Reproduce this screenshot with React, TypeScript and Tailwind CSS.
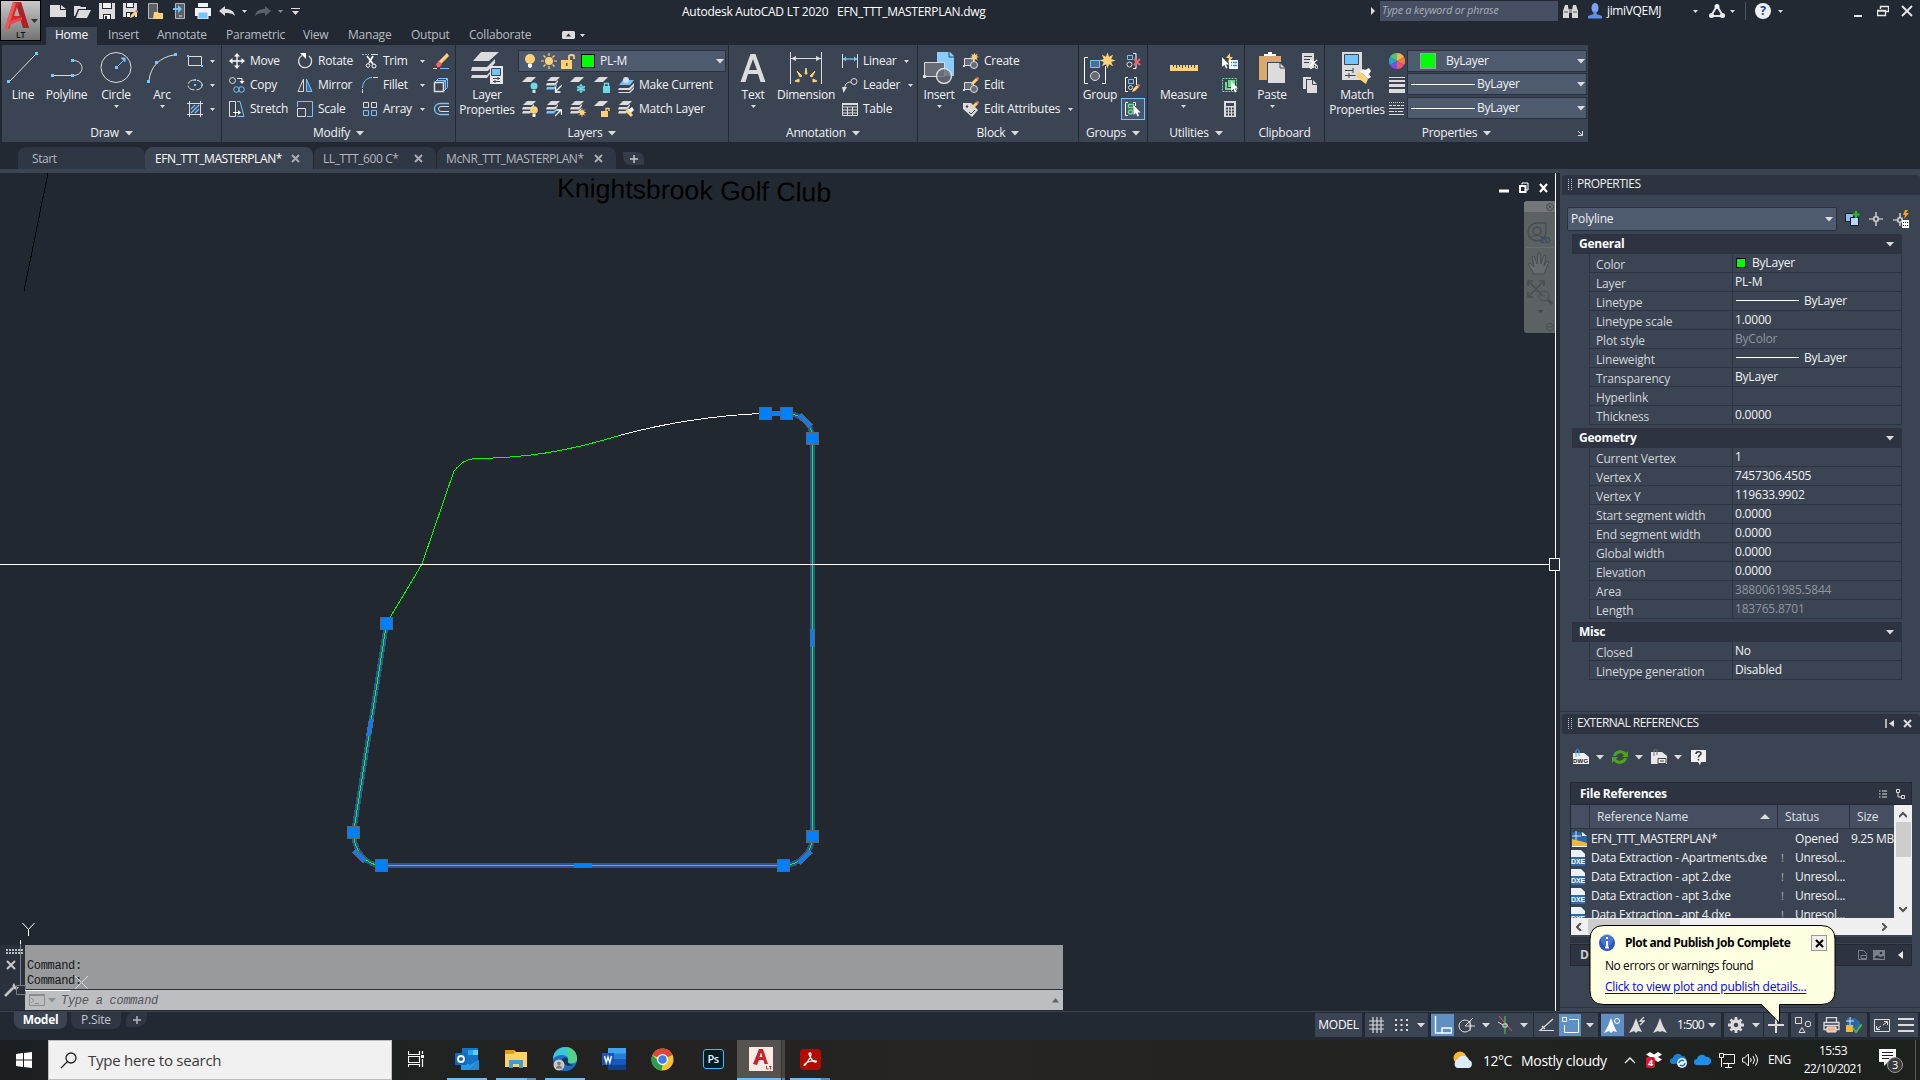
import type { ReactNode } from 'react';

const G = '#dcdcdc';
const B = '#76c4ff';
const Y = '#ffd27a';
const T = '#6cd9e6';
const BG = '#3b4453';

interface IconProps {
  w?: number;
  h?: number;
  children: ReactNode;
}

function Icon({ w = 16, h = 16, children }: IconProps) {
  return (
    <svg width={w} height={h} viewBox={`0 0 ${w} ${h}`} fill="none" className="shrink-0">
      {children}
    </svg>
  );
}

function Caret({ big = false, color = G }: { big?: boolean; color?: string }) {
  return big ? (
    <svg width="8" height="5" viewBox="0 0 8 5" className="shrink-0"><path d="M0 0h8L4 4.6z" fill={color} /></svg>
  ) : (
    <svg width="5" height="3" viewBox="0 0 5 3" className="shrink-0"><path d="M0 0h5L2.5 3z" fill={color} /></svg>
  );
}

/* ---------- shared glyphs ---------- */

const Sheet = ({ x = 0, y = 0, c = G }: { x?: number; y?: number; c?: string }) => (
  <path d={`M${x + 5} ${y}h9l-5 5h-9z`} fill={c} />
);

const Stack = ({ mid = G }: { mid?: string }) => (
  <>
    <path d="M5 0h9l-4 4H1z" fill={G} />
    <path d="M1 6h8l3-3v2L9 8.500H0z" fill={G} />
    <path d="M1 10h7l3-3v2l-3 3.500H0z" fill={mid} />
  </>
);

const Cursor = ({ x, y }: { x: number; y: number }) => (
  <path d={`M${x} ${y}v10l2.500-2 1.500 3.500 1.500-.8-1.500-3.200h3z`} fill="#fff" />
);

const Pencil = ({ x, y }: { x: number; y: number }) => (
  <g transform={`translate(${x} ${y})`}>
    <path d="M0 8l1-3 4-4 2 2-4 4z" fill={Y} />
    <path d="M5 1l1-1h1l1 1v1L7 3z" fill="#f4606c" />
  </g>
);

const Star = ({ x, y, r }: { x: number; y: number; r: number }) => {
  const pts = Array.from({ length: 16 }, (_, i) => {
    const a = (i * Math.PI) / 8;
    const d = i % 2 ? r * 0.5 : r;
    return `${x + d * Math.cos(a)},${y + d * Math.sin(a)}`;
  });
  return <polygon points={pts.join(' ')} fill={Y} />;
};

/* ---------- title bar ---------- */

function QuickAccess() {
  return (
    <div className="flex items-center h-[22px] pl-[9px]">
      <Icon w={16} h={12}><path d="M0 0h10v5h6v7H0z" fill={G} /><path d="M11 0l5 4h-5z" fill={G} /></Icon>
      <div className="w-2" />
      <Icon w={17} h={13}><path d="M0 1h6l1 1h5v2H4L1 11H0z" fill={G} /><path d="M5 5h12l-4 8H2z" fill={G} /></Icon>
      <div className="w-2" />
      <Icon><path d="M0 0h16v16H0z" fill={G} /><path d="M3 0h10v6H3zM4 11h8v5H4z" fill="#222933" /><path d="M4 0h8v5H4zM5 12h6v4H5z" fill="#f4f4f4" /><path d="M6 13h2v3H6z" fill="#222933" /></Icon>
      <div className="w-2" />
      <Icon><path d="M0 0h14v14H0z" fill={G} /><path d="M3 0h8v5H3zM3 9h9v6H3z" fill="#222933" /><path d="M4 0h6v4H4zM4 10h3v4H4z" fill="#f4f4f4" /><Pencil x={7} y={7} /></Icon>
      <div className="w-[9px]" />
      <Icon w={16} h={17}><path d="M.5.500h9v15h-9z" fill="#5d6166" stroke="#b4b7ba" /><path d="M6 9h4l1 1h4v6H5z" fill={Y} /></Icon>
      <div className="w-[9px]" />
      <Icon w={13} h={17}><path d="M2.500.500h9v15h-9z" fill="#5d6166" stroke="#b4b7ba" /><path d="M0 5h5V2l4 4-4 4V7H0z" fill={B} /><path d="M6 13h3" stroke={G} /></Icon>
      <div className="w-[9px]" />
      <Icon w={16} h={16}><path d="M3 0h10v4H3zM0 5h16v8h-3V9H3v4H0z" fill="#f2f2f2" /><path d="M3 9h10v7H3z" fill={B} stroke="#f2f2f2" /></Icon>
      <div className="w-2" />
      <Icon w={16} h={11}><path d="M0 5l6-5v3c6 0 9 2 10 7-3-3-6-3-10-3v3z" fill={G} /></Icon>
      <div className="w-[7px]" /><Caret />
      <div className="w-2" />
      <Icon w={16} h={11}><path d="M16 5l-6-5v3C4 3 1 5 0 10c3-3 6-3 10-3v3z" fill="#5c6168" /></Icon>
      <div className="w-[7px]" /><Caret color="#8b8f95" />
      <div className="w-2" />
      <Icon w={9} h={7}><path d="M0 0h9v1H0zM1 3h7L4.500 7z" fill={G} /></Icon>
    </div>
  );
}

function AppButton() {
  return (
    <div className="w-[41px] h-[41px] shrink-0 border border-black bg-linear-to-b from-[#c9c9c9] to-[#747474]">
      <svg width="39" height="39" viewBox="0 0 39 39">
        <path d="M4 27L12 1h8l8 26h-6l-2-7h-9l-3 8z" fill="#d32a30" />
        <path d="M13 15l3-9 3 9z" fill="#a9a9a9" />
        <path d="M4 27L12 1l3 1-8 26z" fill="#ef5a57" />
        <path d="M16 6l4-5 8 26-6 0z" fill="#9e1b22" opacity=".65" />
        <path d="M8 20l13-4v3l-13 5z" fill="#e8484a" />
        <path d="M30 18h7l-3.500 4z" fill="#333" />
        <text x="15" y="37" fontFamily="Open Sans, sans-serif" fontSize="8.500" fontWeight="600" fill="#111">LT</text>
      </svg>
    </div>
  );
}

function TitleBar() {
  return (
    <div className="flex h-[27px]">
      <div className="w-[641px]"><QuickAccess /></div>
      <div className="flex items-center h-6 w-[689px] text-[12px] tracking-[-0.26px] text-white whitespace-pre">
        <span className="w-[155px]">Autodesk AutoCAD LT 2020</span>
        <span>EFN_TTT_MASTERPLAN.dwg</span>
      </div>
      <div className="flex items-center h-[22px]">
        <svg width="4" height="8"><path d="M0 0l4 4-4 4z" fill={G} /></svg>
        <div className="ml-[5px] w-[178px] h-5 bg-[#464f61] text-[10.5px] tracking-[-0.1px] italic text-[#aab0ba] flex items-center pl-[2px]">Type a keyword or phrase</div>
        <div className="w-[5px]" />
        <Icon w={15} h={14}><path d="M2 1h3v2l1 3v8H0V7zM10 1h3l2 6v7H9V6z" fill="#d8d8d8" /><path d="M6 5h3v4H6z" fill="#9a9a9a" /><path d="M1 8h4M10 8h4" stroke="#555" /></Icon>
        <div className="w-[10px]" />
        <Icon w={14} h={16}><ellipse cx="7" cy="5" rx="3.500" ry="5" fill="#78a6f5" /><path d="M5.500 8h3v3l5.500 2v2.500H0V13l5.500-2z" fill="#5f8fe8" /></Icon>
        <span className="ml-[5px] w-[86px] text-[12px] tracking-[-0.35px] text-white">jimiVQEMJ</span>
        <Caret />
        <div className="w-[11px]" />
        <Icon w={16} h={14}><path d="M8 2L2 12h12z" stroke="#dfe4f2" strokeWidth="2" /><circle cx="8" cy="2.500" r="2.500" fill="#eee" /><circle cx="2.500" cy="11.500" r="2.500" fill="#eee" /><circle cx="13.500" cy="11.500" r="2.500" fill="#eee" /></Icon>
        <div className="w-[5px]" /><Caret />
        <div className="w-px h-[18px] bg-[#4a5364] ml-[10px] mr-[9px]" />
        <div className="w-[16px] h-[16px] rounded-full bg-[#eef2fb] text-[#1d3fa8] text-[12px] font-bold flex items-center justify-center leading-none">?</div>
        <div className="w-[7px]" /><Caret />
        <div className="w-[71px]" />
        <Icon w={9} h={12}><path d="M0 10h8v2H0z" fill="#e8e8e8" /></Icon>
        <div className="w-[14px]" />
        <Icon w={12} h={12}><path d="M3.500 4V1.500h8v5H9M.500 5.500h8v5h-8zM0 6h9" stroke="#e8e8e8" strokeWidth="1.400" /></Icon>
        <div className="w-[12px]" />
        <Icon w={12} h={12}><path d="M1 1l10 10M11 1L1 11" stroke="#e8e8e8" strokeWidth="1.800" /></Icon>
      </div>
    </div>
  );
}

function MenuTabs() {
  return (
    <div className="flex h-[18px] text-[12px] tracking-[-0.22px] text-[#b9bdc3] leading-[16px]">
      <div className="w-[5px]" />
      <div className="w-[51px] bg-[#3b4453] text-white text-center">Home</div>
      <div className="w-[11px]" />
      <div className="w-[49px]">Insert</div>
      <div className="w-[69px]">Annotate</div>
      <div className="w-[77px]">Parametric</div>
      <div className="w-[45px]">View</div>
      <div className="w-[63px]">Manage</div>
      <div className="w-[58px]">Output</div>
      <div className="w-[93px]">Collaborate</div>
      <div className="flex items-center gap-[5px] h-4">
        <Icon w={13} h={8}><rect width="13" height="8" rx="1.500" fill={G} /><path d="M4 5.500h5L6.500 2.500z" fill="#222933" /></Icon>
        <Caret />
      </div>
    </div>
  );
}

/* ---------- ribbon ---------- */

interface PanelProps {
  label: string;
  className: string;
  caret?: boolean;
  corner?: boolean;
  children: ReactNode;
}

function Panel({ label, className, caret = true, corner = false, children }: PanelProps) {
  return (
    <div className={`${className} h-[97px] bg-[#3b4453] flex flex-col shrink-0`}>
      <div className="flex h-[76px] pt-[4px]">{children}</div>
      <div className="h-[21px] flex items-center justify-center gap-[6px] pt-[3px] relative">
        <span>{label}</span>
        {caret && <Caret big />}
        {corner && <svg width="5" height="5" className="absolute right-[5px] top-[10px]"><path d="M0 0l4 4M4.500 0v4.500H0" stroke={G} fill="none" /></svg>}
      </div>
    </div>
  );
}

interface BigProps {
  icon: ReactNode;
  label: string;
  label2?: string;
  className: string;
  caret?: boolean;
}

function Big({ icon, label, label2, className, caret }: BigProps) {
  return (
    <div className={`${className} flex flex-col items-center shrink-0 pt-[3px]`}>
      <div className="h-8 flex items-center">{icon}</div>
      <div className="h-[15px] mt-[3px] leading-[15px]">{label}</div>
      {label2 && <div className="h-[15px] leading-[15px]">{label2}</div>}
      {caret && <div className="pt-[3px] h-2 flex"><Caret /></div>}
    </div>
  );
}

interface CmdProps {
  icon: ReactNode;
  label?: string;
  caret?: boolean;
}

function Cmd({ icon, label, caret }: CmdProps) {
  return (
    <div className="h-6 flex items-center">
      <div className="w-[17px] flex shrink-0">{icon}</div>
      {label && <span className="ml-1">{label}</span>}
      {caret && <div className="ml-[8px] flex"><Caret /></div>}
    </div>
  );
}

function DrawPanel() {
  return (
    <Panel label="Draw" className="w-[219px]">
      <Big className="w-[42px]" label="Line" icon={
        <Icon w={32} h={32}><path d="M3 29L28 3" stroke={G} /><path d="M0 28h3v3H0zM28 0h3v3h-3z" fill={B} /></Icon>
      } />
      <Big className="w-[45px]" label="Polyline" icon={
        <Icon w={32} h={32}><path d="M2 23.500h20c12 0 12-15 0-15" stroke={G} /><path d="M0 22h3v3H0zM20 22h3v3h-3zM20 7h3v3h-3z" fill={B} /></Icon>
      } />
      <Big className="w-[54px]" label="Circle" caret icon={
        <Icon w={32} h={32}><circle cx="16" cy="15.500" r="15" stroke={G} /><path d="M17 15l8-8M21 6h4v4" stroke={B} /><path d="M15 14h3v3h-3zM25 6h-4l4 4z" fill={B} /></Icon>
      } />
      <Big className="w-[38px]" label="Arc" caret icon={
        <Icon w={32} h={32}><path d="M3 29C4 15 14 5 28 3" stroke={G} /><path d="M1 28h3v3H1zM9 9h3v3H9zM28 1h3v3h-3z" fill={B} /></Icon>
      } />
      <div className="ml-[6px] flex flex-col">
        {[
          <Icon key="rect"><path d="M1.500 3.500h13v9h-13z" stroke={G} /><path d="M0 2h2v2H0zM14 12h2v2h-2z" fill={B} /></Icon>,
          <Icon key="ellipse"><ellipse cx="8" cy="8" rx="7" ry="5" stroke={G} strokeDasharray="8 2" /><path d="M7 2h2v2H7zM7 7h2v2H7zM14 7h2v2h-2z" fill={B} /></Icon>,
          <Icon key="hatch"><path d="M2.500 0v16M13.500 0v16M0 2.500h16M0 13.500h16" stroke={G} /><path d="M4 8l4-4M4 12l8-8M8 12l4-4" stroke={B} strokeWidth="1.300" /></Icon>
        ].map((icon, i) => (
          <div key={i} className="h-6 flex items-center gap-[7px]">{icon}<Caret /></div>
        ))}
      </div>
    </Panel>
  );
}

function ModifyPanel() {
  return (
    <Panel label="Modify" className="w-[233px]">
      <div className="w-[68px] ml-[7px]">
        <Cmd label="Move" icon={<Icon><path d="M8 1v14M1 8h14" stroke="#fff" strokeWidth="1.300" /><path d="M8 0l3 3.500H5zM8 16l3-3.500H5zM0 8l3.500-3v6zM16 8l-3.500-3v6z" fill="#fff" /></Icon>} />
        <Cmd label="Copy" icon={<Icon><circle cx="3.500" cy="3.500" r="3" stroke={G} /><path d="M8 1.500h5v4" stroke="#fff" /><path d="M10.500 4h5L13 7z" fill="#fff" /><circle cx="7.500" cy="12.500" r="2.800" stroke={B} /><circle cx="12.500" cy="12.500" r="2.800" stroke={B} /></Icon>} />
        <Cmd label="Stretch" icon={<Icon><path d="M.500.500h6v15h-6z" stroke={G} /><path d="M8 .500h3l4 15H8" stroke={B} /><path d="M4 11.500h5" stroke="#fff" /><path d="M9 9l3 2.500L9 14z" fill="#fff" /></Icon>} />
      </div>
      <div className="w-[65px]">
        <Cmd label="Rotate" icon={<Icon><path d="M5 2.500A6.500 6.500 0 1 0 12 3" stroke={G} strokeWidth="1.300" /><path d="M3 0h6v6z" fill="#fff" /></Icon>} />
        <Cmd label="Mirror" icon={<Icon><path d="M6.500 2v12.500H1z" stroke={G} /><path d="M9.500 2v12.500H15z" stroke={B} fill="#3f6f96" /></Icon>} />
        <Cmd label="Scale" icon={<Icon><path d="M.500 6V.500h15v15H10" stroke={B} /><path d="M.500 7.500h8v8h-8z" stroke={G} /></Icon>} />
      </div>
      <div className="w-[71px]">
        <div className="flex items-center"><Cmd label="Trim" icon={<Icon><path d="M0 1.500h7" stroke={B} strokeDasharray="2 1" /><path d="M9 1.500h7" stroke={G} /><path d="M5 3l6 8M11 3L7 10" stroke="#fff" strokeWidth="1.600" /><circle cx="6" cy="12.500" r="1.800" stroke="#fff" /><circle cx="12" cy="13" r="2" stroke="#fff" /></Icon>} /><div className="ml-[12px] flex"><Caret /></div></div>
        <div className="flex items-center"><Cmd label="Fillet" icon={<Icon><path d="M.500 11C.500 5 5 .500 10 .500" stroke={B} /><path d="M.500 12v4M11 .500h5" stroke={G} /></Icon>} /><div className="ml-[12px] flex"><Caret /></div></div>
        <Cmd label="Array" caret icon={<Icon><path d="M1.500 1.500h5v5h-5zM9.500 1.500h5v5h-5z" stroke={G} /><path d="M1.500 9.500h5v5h-5zM9.500 9.500h5v5h-5z" stroke={B} /></Icon>} />
      </div>
      <div className="w-4">
        <Cmd icon={<Icon><path d="M5 9l9-9 2 3-8 8z" fill={Y} /><path d="M3 11l3-3 3 3-2 3H4z" fill="#f4606c" /><path d="M0 15.500h4" stroke={G} /><path d="M7 15.500h9" stroke={B} /></Icon>} />
        <Cmd icon={<Icon><path d="M3 3.500h9.500V13M5.500 1.500h9v9" stroke={B} /><path d="M1.500 5.500h9v9h-9z" stroke={G} strokeWidth="1.500" /><path d="M1.500 5.500l4-4M10.500 5.500l4-4M10.500 14.500l4-4" stroke={B} /></Icon>} />
        <Cmd icon={<Icon><path d="M16 2.500H7a5.500 5.500 0 0 0 0 11h9" stroke={B} strokeWidth="1.300" /><path d="M16 5.500H8a2.500 2.500 0 0 0 0 5h8" stroke={G} /></Icon>} />
      </div>
    </Panel>
  );
}

function LayersPanel() {
  return (
    <Panel label="Layers" className="w-[272px]">
      <Big className="w-[62px]" label="Layer" label2="Properties" icon={
        <Icon w={32} h={32}><path d="M10 0h18l-10 9H2z" fill={G} /><path d="M1 15h15l8-8v4l-7 8H0zM1 23h15l3-3v2l-3 4H0z" fill={G} /><path d="M19 14h13v18H19z" fill="#e8e8e8" /><path d="M20.500 16.500h9v7h-9z" fill={B} stroke="#3b4453" /><path d="M22 26.500h7M22 29.500h7M27 25v3M24 28v3" stroke="#3b4453" /></Icon>
      } />
      <div className="flex flex-col">
        <div className="mt-px h-[22px] w-[208px] bg-[#4e5b6f] border border-[#2a313d] flex items-center pl-[6px]">
          <Icon w={10} h={14}><circle cx="5" cy="5" r="5" fill={Y} /><path d="M3 10h4v3l-2 1-2-1z" fill="#fff" /></Icon>
          <div className="w-[6px]" />
          <Icon><circle cx="8" cy="8" r="4" fill={Y} /><path d="M8 0v3M8 13v3M0 8h3M13 8h3M2.500 2.500l2 2M11.500 11.500l2 2M13.500 2.500l-2 2M4.500 11.500l-2 2" stroke={Y} strokeWidth="1.200" /></Icon>
          <div className="w-[4px]" />
          <Icon w={14} h={15}><path d="M0 6h11v9H0z" fill={Y} /><path d="M8 6V2.500C8 .500 13 .500 13 2.500V5" stroke={Y} strokeWidth="1.800" /><path d="M5 9h1.500v3H5z" fill="#4e5b6f" /></Icon>
          <div className="w-[14px] h-[14px] bg-[#00ff00] border border-black ml-[6px]" />
          <span className="ml-[5px] flex-1">PL-M</span>
          <div className="mr-[1px] flex"><Caret big /></div>
        </div>
        <div className="flex h-6 mt-px items-center pl-1">
          <div className="grid grid-cols-[24px_24px_24px_24px] items-center">
            <Icon><Sheet y={0} /><circle cx="12" cy="9" r="3.500" fill={T} /><path d="M10.500 13h3v3h-3z" fill={G} /></Icon>
            <Icon><Stack mid={B} /><path d="M16 8l-6 6M9.500 10v5h5" stroke="#fff" strokeWidth="1.300" /></Icon>
            <Icon><Sheet y={0} /><path d="M11 7v9M7 9.500l8 4M15 9.500l-8 4" stroke={T} strokeWidth="1.400" /><circle cx="11" cy="11.500" r="3" stroke={T} /></Icon>
            <Icon><Sheet y={0} /><path d="M9 9h7v7H9z" fill={T} /><path d="M10.500 9V6.500h4V9" stroke={T} strokeWidth="1.300" /></Icon>
          </div>
          <Cmd label="Make Current" icon={<Icon><path d="M5 3h11l-4 5H1z" fill={B} /><circle cx="8" cy="3" r="3" fill={G} /><path d="M1 11h10l5-5v3l-4 4H0zM1 15h10l5-5v2l-4 4H0z" fill={G} /></Icon>} />
        </div>
        <div className="flex h-6 items-center pl-1">
          <div className="grid grid-cols-[24px_24px_24px_24px] items-center">
            <Icon><Stack /><circle cx="12" cy="9" r="3.800" fill={Y} /><path d="M10.500 13h3v3h-3z" fill="#fff" /></Icon>
            <Icon><Stack mid={B} /><path d="M9 15l6-6M10.500 9h5v5" stroke="#fff" strokeWidth="1.300" /></Icon>
            <Icon><Stack /><circle cx="12" cy="11.500" r="2.500" fill={Y} /><path d="M12 7v9M7.500 11.500h9M9 8.500l6 6M15 8.500l-6 6" stroke={Y} strokeWidth=".8" /></Icon>
            <Icon><Sheet y={0} /><path d="M7 10h7v6H7z" fill={Y} /><path d="M12 10V7.500h3V10" stroke={Y} strokeWidth="1.300" /></Icon>
          </div>
          <Cmd label="Match Layer" icon={<Icon><Stack /><path d="M7 10l3-2 5 6-2 2z" fill={Y} /><path d="M10 9l4-3 2 3-3 3z" fill="#fff" /></Icon>} />
        </div>
      </div>
    </Panel>
  );
}

function AnnotationPanel() {
  return (
    <Panel label="Annotation" className="w-[188px]">
      <div className="w-[4px]" />
      <Big className="w-[40px]" label="Text" caret icon={
        <Icon w={26} h={30}><path d="M10.500 1h5l10 28h-5l-2.500-8H8l-2.500 8H.500zM13 6l-4 11h8z" fill={G} fillRule="evenodd" /></Icon>
      } />
      <Big className="w-[66px]" label="Dimension" icon={
        <Icon w={32} h={32}><path d="M.500 0v32M31.500 0v32M1 6.500h30" stroke={G} /><path d="M1 6.500l5-2.500v5zM31 6.500l-5-2.500v5z" fill={G} /><path d="M5 29l4-2v3zM27 29l-4-2v3zM7 19l5 5-2 1zM25 19l-5 5 2 1zM15 22l1-6 1 6z" fill={Y} stroke={Y} /></Icon>
      } />
      <div className="ml-[3px]">
        <Cmd label="Linear" caret icon={<Icon><path d="M.500 1v14M15.500 1v14" stroke={G} /><path d="M1 6h14" stroke={B} strokeWidth="1.300" /><path d="M1 6l3-2.500v5zM15 6l-3-2.500v5z" fill={B} /></Icon>} />
        <Cmd label="Leader" caret icon={<Icon><circle cx="12" cy="4.500" r="3" stroke={G} /><path d="M9 5C4 5 3 8 2.500 12" stroke={G} /><path d="M0 10h5l-3.500 6z" fill={G} /></Icon>} />
        <Cmd label="Table" icon={<Icon><path d="M.500 2.500h15v12H.500zM0 6h16M0 9h16M0 12h16M5.500 6v9M10.500 6v9" stroke={G} /><path d="M0 2h16v2H0z" fill={G} /></Icon>} />
      </div>
    </Panel>
  );
}

const BlockShape = () => (
  <>
    <path d="M1.500 5.500h9v7h-9z" fill="#666b75" stroke={G} />
    <circle cx="11" cy="12" r="3.500" fill="#666b75" stroke={G} />
    <path d="M0 12h2v2H0z" fill={G} />
  </>
);

function BlockPanel() {
  return (
    <Panel label="Block" className="w-[160px]">
      <Big className="w-[42px]" label="Insert" caret icon={
        <Icon w={32} h={32}><path d="M14 0h13l4 4v20H14z" fill="#8accff" /><path d="M26 0v5h6" stroke="#3b4453" /><path d="M1.500 10.500h20v14h-20z" fill="#666b75" stroke={G} /><circle cx="21" cy="24" r="7.500" fill="#666b75" fillOpacity=".8" stroke={G} strokeWidth="1.400" /><path d="M0 23h3v3H0z" fill={G} /></Icon>
      } />
      <div className="ml-[3px]">
        <Cmd label="Create" icon={<Icon><BlockShape /><Star x={11.500} y={4} r={4.500} /></Icon>} />
        <Cmd label="Edit" icon={<Icon><BlockShape /><Pencil x={8} y={0} /></Icon>} />
        <Cmd label="Edit Attributes" caret icon={<Icon><path d="M0 2h8l7 7-6 7-9-8z" fill={G} /><circle cx="4" cy="5.500" r="1.200" fill={BG} /><path d="M6 11l2 2 4-4" stroke={BG} /><Pencil x={8} y={0} /></Icon>} />
      </div>
    </Panel>
  );
}

function GroupsPanel() {
  return (
    <Panel label="Groups" className="w-[68px]">
      <Big className="w-[42px]" label="Group" icon={
        <Icon w={32} h={32}><path d="M4 5.500H.500v26H4M18 31.500h3.500V14" stroke="#fff" /><path d="M6.500 8.500h9v7h-9z" fill="#4c6f90" stroke={B} /><circle cx="11" cy="24" r="4.500" fill="#666b75" stroke={G} /><Star x={23.500} y={8.500} r={8} /></Icon>
      } />
      <div className="flex flex-col items-center w-6">
        <div className="h-6 flex items-center"><Icon><path d="M2.500 2.500h5v4h-5z" stroke={B} /><circle cx="4.500" cy="11.500" r="2.500" stroke={G} /><path d="M8 .500h3v15H8" stroke="#fff" /><path d="M9 6l6 6M15 6l-6 6" stroke="#f4606c" strokeWidth="2" /></Icon></div>
        <div className="h-6 flex items-center"><Icon><path d="M3 .500H.500v14H3M9 .500h2.500V8" stroke="#fff" /><path d="M3.500 2.500h5v4h-5z" stroke={B} /><circle cx="5.500" cy="10.500" r="2" stroke={G} /><Pencil x={7} y={7} /></Icon></div>
        <div className="h-[22px] w-6 mt-px border border-[#76c4ff] bg-[#46566c] flex items-center justify-center"><Icon><path d="M3 1.500H.500v13H3M8 1.500h2.500V5" stroke="#fff" /><path d="M3.500 3.500h5v3h-5z" stroke="#6fd98c" strokeWidth="1.400" /><circle cx="5.500" cy="11" r="2" stroke="#6fd98c" strokeWidth="1.400" /><Cursor x={8.500} y={4} /></Icon></div>
      </div>
    </Panel>
  );
}

function UtilitiesPanel() {
  return (
    <Panel label="Utilities" className="w-[96px]">
      <Big className="w-[71px]" label="Measure" caret icon={
        <Icon w={28} h={32}><path d="M0 13h28v6H0z" fill={Y} /><path d="M3.500 13v2M6.500 13v3M9.500 13v2M12.500 13v3M15.500 13v2M18.500 13v3M21.500 13v2M24.500 13v3" stroke={BG} /></Icon>
      } />
      <div className="ml-[3px]">
        <Cmd icon={<Icon><path d="M8 0L4 5h3l-1 5 5-6H8z" fill={Y} /><Cursor x={0} y={4} /><path d="M7 7h9v9H7z" fill="#fff" /><path d="M9 9.500h1M9 12.500h1M11 9.500h4M11 12.500h4" stroke="#2f8ad8" strokeWidth="1.300" /></Icon>} />
        <Cmd icon={<Icon><path d="M.500 1.500h14v13H.500z" stroke="#6fd98c" strokeDasharray="2 1" /><path d="M6 3h7v7H6z" fill="#6fd98c" /><path d="M3 5h2v6h6v2H3z" fill="#6fd98c" /><Cursor x={9} y={4} /></Icon>} />
        <Cmd icon={<Icon><path d="M2 0h12v16H2z" fill={G} /><path d="M4 2h8v3H4z" fill={BG} /><path d="M4 7.500h8M4 10.500h8M4 13.500h8" stroke={BG} strokeWidth="2" strokeDasharray="2 1" /></Icon>} />
      </div>
    </Panel>
  );
}

function ClipboardPanel() {
  return (
    <Panel label="Clipboard" className="w-[79px]" caret={false}>
      <Big className="w-[54px]" label="Paste" caret icon={
        <Icon w={27} h={32}><path d="M0 4h22v24H0z" fill="#d9aa6c" /><path d="M5 4V2h4V0h4v2h4v2z" fill="#fff" /><path d="M8 10h18v22H8z" fill={BG} /><path d="M9 11h12l5 5v15H9z" fill={G} /><path d="M21 10v6h6" stroke={BG} /></Icon>
      } />
      <div className="ml-[3px]">
        <Cmd icon={<Icon><path d="M0 0h12v15H0z" fill={G} /><path d="M2 3.500h8M2 6.500h6M2 9.500h5" stroke={BG} /><path d="M8 7l7 6M15 7l-7 6" stroke="#fff" strokeWidth="1.600" /><circle cx="9" cy="14" r="1.500" stroke="#fff" /><circle cx="14.500" cy="14" r="1.500" stroke="#fff" /></Icon>} />
        <Cmd icon={<Icon><path d="M1 0h8v2H4v10H1z" fill={G} /><path d="M5 3h6l4 4v9H5z" fill={G} /><path d="M10.500 3v4.500H15" stroke={BG} /></Icon>} />
      </div>
    </Panel>
  );
}

function ComboLine() {
  return (
    <>
      <div className="w-16 h-px bg-white ml-[3px]" />
      <span className="ml-[2px] flex-1">ByLayer</span>
      <div className="mr-[1px] flex"><Caret big /></div>
    </>
  );
}

function PropertiesPanel() {
  return (
    <Panel label="Properties" className="w-[263px]" corner>
      <Big className="w-[64px]" label="Match" label2="Properties" icon={
        <Icon w={30} h={32}><path d="M0 0h20v28H0z" fill={G} /><path d="M2.500 2.500h14v10h-14z" fill={B} stroke={BG} /><path d="M3 18.500h8M3 23.500h13M11 16v5M7 21v5" stroke={BG} /><path d="M13 24l5-5 8 8-2 5z" fill={Y} /><path d="M18 19l3-2 2 1 4-2 2 3-2 3 2 3-3 2z" fill="#f6f6f6" /></Icon>
      } />
      <div className="w-[18px]">
        <div className="h-6 flex items-center">
          <Icon>
            <path d="M8 8V0a8 8 0 0 1 7 4z" fill="#f0b64d" /><path d="M8 8l7-4a8 8 0 0 1 0 8z" fill="#ef7a4a" /><path d="M8 8l7 4a8 8 0 0 1-7 4z" fill="#e85470" />
            <path d="M8 8v8a8 8 0 0 1-7-4z" fill="#7d4de8" /><path d="M8 8l-7 4a8 8 0 0 1 0-8z" fill="#22a7c9" /><path d="M8 8L1 4a8 8 0 0 1 7-4z" fill="#55c07a" />
          </Icon>
        </div>
        <div className="h-6 flex items-center"><Icon><path d="M0 .500h16" stroke={G} /><path d="M0 4h16" stroke={G} strokeWidth="2" /><path d="M0 8.500h16" stroke={G} strokeWidth="3" /><path d="M0 14h16" stroke={G} strokeWidth="4" /></Icon></div>
        <div className="h-6 flex items-center"><Icon><path d="M0 1.500h15" stroke={G} strokeDasharray="1 1" /><path d="M0 4.500h15" stroke={G} strokeDasharray="3 1" /><path d="M0 7.500h15M0 13.500h15" stroke={G} /><path d="M0 10.500h15" stroke={G} strokeDasharray="5 1 2 1" /></Icon></div>
      </div>
      <div className="flex flex-col pt-px gap-px w-[180px]">
        <div className="h-[22px] bg-[#4e5b6f] border border-[#2a313d] flex items-center pl-[12px]">
          <div className="w-4 h-4 bg-[#00ff00] border border-[#a0a4aa]" />
          <span className="ml-[10px] flex-1">ByLayer</span>
          <div className="mr-[1px] flex"><Caret big /></div>
        </div>
        <div className="h-[22px] bg-[#4e5b6f] border border-[#2a313d] flex items-center"><ComboLine /></div>
        <div className="h-[22px] mt-px bg-[#4e5b6f] border border-[#2a313d] flex items-center"><ComboLine /></div>
      </div>
    </Panel>
  );
}

function Ribbon() {
  return (
    <div className="flex gap-px pl-[2px] h-[97px] text-[12px] tracking-[-0.25px] text-[#f1f2f3] whitespace-nowrap leading-none">
      <DrawPanel />
      <ModifyPanel />
      <LayersPanel />
      <AnnotationPanel />
      <BlockPanel />
      <GroupsPanel />
      <UtilitiesPanel />
      <ClipboardPanel />
      <PropertiesPanel />
    </div>
  );
}

/* ---------- document tabs ---------- */

const TabX = () => <Icon w={9} h={9}><path d="M1 1l7 7M8 1L1 8" stroke="#a9adb3" strokeWidth="2" /></Icon>;

function DocTabs() {
  return (
    <div className="flex h-[27px] pt-[5px] text-[12px] tracking-[-0.4px] text-[#b4b8be] whitespace-nowrap">
      <div className="ml-[18px] w-[127px] h-[22px] rounded-t-[8px] bg-[#2f3644] flex items-center pl-[14px] pt-px">Start</div>
      <div className="w-[168px] h-[22px] rounded-t-[8px] bg-[#3b4453] text-white flex items-center pl-[10px] pt-px"><span className="w-[136px]">EFN_TTT_MASTERPLAN*</span><TabX /></div>
      <div className="w-[122px] ml-px h-[22px] rounded-t-[8px] bg-[#2f3644] flex items-center pl-[9px] pt-px"><span className="w-[91px]">LL_TTT_600 C*</span><TabX /></div>
      <div className="w-[179px] ml-px h-[22px] rounded-t-[8px] bg-[#2f3644] flex items-center pl-[9px] pt-px"><span className="w-[148px]">McNR_TTT_MASTERPLAN*</span><TabX /></div>
      <div className="w-[21px] ml-[7px] h-[13px] mt-[5px] rounded-tr-[8px] rounded-bl-[8px] bg-[#343c4a] flex items-center justify-center"><Icon w={8} h={8}><path d="M4 0v8M0 4h8" stroke="#c4c7cb" strokeWidth="1.500" /></Icon></div>
    </div>
  );
}

/* ---------- drawing area ---------- */

const grips = [
  [765.5, 413.5], [786.5, 413.5], [812.5, 438.5], [812.5, 836.5],
  [783.5, 865.5], [381.5, 865.5], [353.5, 832.5], [386.5, 623.5]
];

const midGrips = ['M799.500 415L811 426.500', 'M812.500 628.500v18', 'M811 851.500L799 863', 'M573.500 865.500h18', 'M354 850.500L365 861.500', 'M371.500 719L368.500 736'];

function Drawing() {
  const selection = 'M765.500 413.500L786.500 413.500C799 413.500 812.500 423 812.500 438.500V836.500C812.500 852 799 865.500 783.500 865.500H381.500C366 865.500 353.500 850 353.500 832.500L386.500 623.500';
  return (
    <svg width="1560" height="838" viewBox="0 173 1560 838" fill="none" shapeRendering="crispEdges" className="block">
      <path d="M48 173L24 291" stroke="#000" />
      <text x="557" y="197" fontFamily="Liberation Sans, sans-serif" fontSize="26.500" textLength="274" lengthAdjust="spacingAndGlyphs" transform="rotate(1 557 197)" fill="#000">Knightsbrook Golf Club</text>
      <path d="M386.500 623.500L422 564L454 471C461 463 466 459 475 458.500C525 458 565 452 619.500 435.500" stroke="#00ff00" />
      <path d="M619.500 435.500C665 423 710 416 760 413.500" stroke="#fff" />
      <path d={selection} stroke="#2d529c" strokeWidth="5" />
      <path d={selection} stroke="#00ff00" />
      {midGrips.map(d => (
        <g key={d}>
          <path d={d} stroke="#5f6872" strokeWidth="5" />
          <path d={d} stroke="#0080ff" strokeWidth="3" />
        </g>
      ))}
      <path d="M771 413.500h9" stroke="#0080ff" strokeWidth="5" />
      {grips.map(([x, y]) => (
        <rect key={`${x}-${y}`} x={x - 6} y={y - 6} width="12" height="12" fill="#0080ff" stroke="#5f6468" />
      ))}
      <path d="M0 564.500h1549M1555.500 173v385M1555.500 571v440" stroke="#fff" />
      <path d="M1556 173h4v385h-4zM1556 571h4v440h-4z" fill="#222933" />
      <rect x="1549.500" y="558.500" width="10" height="12" stroke="#fff" />
    </svg>
  );
}

function NavBar() {
  return (
    <div className="absolute left-[1524px] top-[28px] w-[31px] h-[132px] rounded-l-[3px] bg-[#5c6164] border-t border-[#73777a]">
      <svg width="31" height="131" viewBox="0 0 31 131" fill="none" stroke="#484d52">
        <path d="M0 0h31v10H0z" fill="#73777a" stroke="none" />
        <circle cx="26" cy="5" r="3.500" /><path d="M24.500 3.500l3 3M27.500 3.500l-3 3" />
        <path d="M22 22v8a9 9 0 1 1-9-9h9z" strokeWidth="1.500" /><circle cx="13" cy="29" r="4" strokeWidth="1.500" />
        <path d="M6 38c1-6 13-6 15 0" />
        <text x="16" y="41" fontFamily="Open Sans, sans-serif" fontSize="8" fontWeight="700" fill="#3d4d60" stroke="none">2D</text>
        <path d="M2 45.500h28" stroke="#696d70" />
        <path d="M10 72L4 62l2-1 4 4-2-10 2-1 3 8 1-11h2l1 11 3-9 2 1-2 10 3-5 2 1-5 12z" fill="#676c70" />
        <path d="M5 80l14 14M19 80L5 94M4 84v-5h5M15 79h5v5M4 90v5h5" strokeWidth="1.500" />
        <circle cx="20" cy="94" r="5" /><path d="M24 98l4 4" strokeWidth="2.500" />
        <path d="M14 108h5l-2.500 3z" fill="#3c4146" stroke="none" />
        <circle cx="26" cy="125" r="3.500" /><path d="M24 125h4" />
      </svg>
    </div>
  );
}

function CommandWindow() {
  return (
    <div className="absolute left-0 top-[772px] w-[1063px] h-[65px] flex font-['Liberation_Mono',monospace]">
      <div className="w-[25px] bg-[#2a303c] flex flex-col items-center pt-1">
        <svg width="17" height="5" className="ml-1"><path d="M0 1h17M0 4h17" stroke="#b8bbc0" strokeWidth="2" strokeDasharray="2 1" /></svg>
        <svg width="10" height="10" className="mt-[6px] mr-[3px]"><path d="M1 1l8 8M9 1L1 9" stroke="#c8cacd" strokeWidth="2" /></svg>
        <svg width="16" height="16" className="mt-[12px] mr-[2px]" fill="none"><path d="M1 14L9 6" stroke="#c0c2c6" strokeWidth="2.500" /><path d="M10 1c-2 2-2 5 0 6s4 0 5-2l-3 0-1-2z" fill="#c0c2c6" /></svg>
      </div>
      <div className="flex-1 flex flex-col">
        <div className="h-[44px] bg-[#989a9b] text-[#16181b] text-[12px] tracking-[-0.35px] leading-[15px] pl-[2px] pt-[14px]">
          <div>Command:</div>
          <div>Command:</div>
        </div>
        <div className="h-px bg-[#2a303c]" />
        <div className="h-5 bg-[#bdbec1] flex items-center pl-1">
          <Icon w={16} h={12}><path d="M.500.500h15v11H.500z" stroke="#8b8d90" /><path d="M0 0h16v2H0z" fill="#8b8d90" /><path d="M2 4l3 2.500L2 9M6 9.500h4" stroke="#8b8d90" /></Icon>
          <div className="w-[3px]" /><Caret big color="#8b8d90" />
          <span className="ml-[5px] pt-px text-[12px] tracking-[-0.27px] italic text-[#55585c] flex-1">Type a command</span>
          <svg width="8" height="5" className="mr-[3px]"><path d="M0 4.500h7L3.500 0z" fill="#606468" /></svg>
        </div>
      </div>
    </div>
  );
}

function Canvas() {
  return (
    <div className="relative w-[1560px] h-[838px] bg-[#212830] overflow-hidden shrink-0">
      <Drawing />
      <svg width="50" height="14" viewBox="0 0 50 14" fill="none" className="absolute left-[1499px] top-[8px]">
        <path d="M0 10h10" stroke="#fff" strokeWidth="3" />
        <path d="M23 3.500V2h6v7h-2" stroke="#fff" /><path d="M21 5h5.500v6H21z" stroke="#fff" strokeWidth="2" />
        <path d="M41 3l7 8M48 3l-7 8" stroke="#fff" strokeWidth="2.200" />
      </svg>
      <NavBar />
      <CommandWindow />
      <svg width="100" height="80" viewBox="0 920 100 80" fill="none" className="absolute left-0 top-[747px]">
        <path d="M22.500 923l6 6.500 6-6.500M28.500 929v7M20.500 940v4" stroke="#fff" />
        <path d="M20.500 944v41M16.500 985.500h9v9h-9z" stroke="#7b7f85" />
        <path d="M25 990.500h46" stroke="#fff" />
        <path d="M75 976l13 13M88 976l-13 13" stroke="#d8d9da" />
      </svg>
    </div>
  );
}

/* ---------- properties palette ---------- */

interface Row {
  name: string;
  value: string;
  kind?: 'swatch' | 'line' | 'dim';
}

const general: Row[] = [
  { name: 'Color', value: 'ByLayer', kind: 'swatch' },
  { name: 'Layer', value: 'PL-M' },
  { name: 'Linetype', value: 'ByLayer', kind: 'line' },
  { name: 'Linetype scale', value: '1.0000' },
  { name: 'Plot style', value: 'ByColor', kind: 'dim' },
  { name: 'Lineweight', value: 'ByLayer', kind: 'line' },
  { name: 'Transparency', value: 'ByLayer' },
  { name: 'Hyperlink', value: '' },
  { name: 'Thickness', value: '0.0000' }
];

const geometry: Row[] = [
  { name: 'Current Vertex', value: '1' },
  { name: 'Vertex X', value: '7457306.4505' },
  { name: 'Vertex Y', value: '119633.9902' },
  { name: 'Start segment width', value: '0.0000' },
  { name: 'End segment width', value: '0.0000' },
  { name: 'Global width', value: '0.0000' },
  { name: 'Elevation', value: '0.0000' },
  { name: 'Area', value: '3880061985.5844', kind: 'dim' },
  { name: 'Length', value: '183765.8701', kind: 'dim' }
];

const misc: Row[] = [
  { name: 'Closed', value: 'No' },
  { name: 'Linetype generation', value: 'Disabled' }
];

function Section({ title, rows }: { title: string; rows: Row[] }) {
  return (
    <div className="w-[330px] ml-[12px] mb-[3px]">
      <div className="h-5 bg-[#2d3340] flex items-center pl-[7px] pr-[8px] font-bold text-white">
        <span className="flex-1 tracking-[-0.25px]">{title}</span>
        <Caret big />
      </div>
      <div className="ml-[17px] border-l border-r border-[#2d3340]">
        {rows.map(row => (
          <div key={row.name} className="flex h-[19px] border-b border-[#2d3340]">
            <div className="w-[142px] pl-[6px] text-[#d3d6da] leading-[21px] tracking-[-0.17px]">{row.name}</div>
            <div className={`flex-1 border-l border-[#2d3340] pl-[2px] flex items-center pb-px tracking-[-0.2px] ${row.kind === 'dim' ? 'text-[#8f959f]' : 'text-[#f2f3f4]'}`}>
              {row.kind === 'swatch' && <div className="w-[10px] h-[10px] bg-[#00ff00] border border-black ml-px mr-[6px]" />}
              {row.kind === 'line' && <div className="w-[63px] h-px bg-white ml-[1px] mr-[5px]" />}
              {row.value}
            </div>
          </div>
        ))}
      </div>
    </div>
  );
}

const Gripper = () => (
  <svg width="4" height="11"><path d="M.500 0v11M3.500 0v11" stroke="#c3c6ca" strokeDasharray="1 1" /></svg>
);

function PropertiesPalette() {
  return (
    <div className="h-[539px] pt-[2px] border-b border-[#2d3340]">
      <div className="h-5 ml-[2px] bg-[#2d3340] rounded-t-[4px] flex items-center pl-[6px] pb-[2px] gap-[5px] text-[#f0f0f0]">
        <Gripper />
        <span className="tracking-[-0.5px]">PROPERTIES</span>
      </div>
      <div className="flex items-center mt-[12px] ml-[7px] h-6">
        <div className="w-[270px] h-[24px] bg-[#4e5b6f] border border-[#2a313d] rounded-[2px] flex items-center pl-[3px] pr-[3px] text-[#f0f0f0]">
          <span className="flex-1">Polyline</span><Caret big />
        </div>
        <div className="w-[8px]" />
        <Icon w={15} h={16}><path d="M.500 2.500h8v8H.500z" fill="#8fb9ea" stroke="#0f1a2c" /><path d="M5.500 6.500h8v8h-8z" fill="#b9d4f3" stroke="#0f1a2c" /><path d="M11 0v7M7.500 3.500h7" stroke="#1fc11f" strokeWidth="2.200" /></Icon>
        <div className="w-[9px]" />
        <Icon w={14} h={14}><path d="M7 0v5M7 9v5M0 7h5M9 7h5M5 5h4v4H5z" stroke="#f2f2f2" strokeWidth="1.200" /></Icon>
        <div className="w-[10px]" />
        <Icon w={17} h={18}><path d="M7 3v5M7 12v4M0 10h5M5 8h4v4H5z" stroke="#f2f2f2" strokeWidth="1.200" /><path d="M12 0l-2 5h2l-1 4 5-6h-3l2-3z" fill="#ff9d1e" /><path d="M9 10h7v8H9z" fill="#fff" /><path d="M10 12.500h5M10 15.500h5" stroke="#222" strokeDasharray="1 1" /></Icon>
      </div>
      <div className="h-[3px]" />
      <Section title="General" rows={general} />
      <Section title="Geometry" rows={geometry} />
      <Section title="Misc" rows={misc} />
    </div>
  );
}

/* ---------- external references palette ---------- */

const DwgIcon = () => (
  <Icon w={15} h={16}><path d="M0 1h10l5 4v11H0z" fill="#2c68a8" /><path d="M0 8l8 2 7 2v4H0z" fill="#f2b83a" /><path d="M4 0v9M0 5h9" stroke="#cfe2f5" /><path d="M10 1l5 4h-5z" fill="#fff" /><path d="M0 15.500h15" stroke="#f5f5f5" /></Icon>
);

const DxeIcon = () => (
  <Icon w={15} h={16}><path d="M0 0h10l4 4v12H0z" fill="#2f6ba9" /><path d="M0 0h10l4 4v3H0z" fill="#eef1f5" /><text x="0" y="14" fontFamily="Liberation Sans, sans-serif" fontSize="7" fontWeight="700" fill="#fff" textLength="14">DXE</text></Icon>
);

const refs = ['Data Extraction - Apartments.dxe', 'Data Extraction - apt 2.dxe', 'Data Extraction - apt 3.dxe', 'Data Extraction - apt 4.dxe'];

function ExternalReferences() {
  return (
    <div className="pt-[2px] h-[298px]">
      <div className="h-5 ml-[2px] bg-[#2d3340] rounded-t-[4px] flex items-center pl-[6px] pr-2 pb-[2px] text-[#f0f0f0]">
        <Gripper />
        <span className="flex-1 ml-[5px] tracking-[-0.5px]">EXTERNAL REFERENCES</span>
        <Icon w={9} h={9}><path d="M1 0v9" stroke={G} strokeWidth="1.500" /><path d="M9 1v7L4 4.500z" fill={G} /></Icon>
        <div className="w-[9px]" />
        <Icon w={9} h={9}><path d="M1 1l7 7M8 1L1 8" stroke={G} strokeWidth="2" /></Icon>
      </div>
      <div className="flex items-center h-[46px] mb-[2px] pl-[13px]">
        <Icon w={16} h={16}><path d="M0 4h11l5 4v7H0z" fill="#f2f2f2" /><path d="M3 8V2c0-2 3-2 3 0v5" stroke="#5aa6f2" /><text x="0" y="14" fontFamily="Liberation Sans, sans-serif" fontSize="6" fontWeight="700" fill="#222" textLength="15">DWG</text></Icon>
        <div className="w-[7px]" /><Caret big /><div className="w-[8px]" />
        <Icon w={16} h={16}><path d="M1 7c1-6 9-8 13-3l2-2v6h-6l2-2c-3-3-6-2-8 1z" fill="#4fa414" /><path d="M15 9c-1 6-9 8-13 3l-2 2V8h6l-2 2c3 3 6 2 8-1z" fill="#4fa414" /></Icon>
        <div className="w-[7px]" /><Caret big /><div className="w-[8px]" />
        <Icon w={16} h={16}><path d="M0 3h11l5 4v8H0z" fill="#e8e8e8" /><path d="M3 7V1.500c0-2 3-2 3 0V6" stroke="#777" /><path d="M7 9.500h8v5H7zM9 12h4" stroke="#444" /></Icon>
        <div className="w-[7px]" /><Caret big /><div className="w-[9px]" />
        <Icon w={15} h={15}><path d="M0 0h15v12h-5l-1 3-2-3H0z" fill="#f2f2f2" /><path d="M5 4c0-3 5-3 5-.5 0 2-2.500 1.500-2.500 4M7.500 9v1.500" stroke="#333" strokeWidth="1.500" /></Icon>
      </div>
      <div className="ml-[10px] w-[342px]">
        <div className="h-[23px] bg-[#2d3340] border border-[#222933] flex items-center pl-[9px] pr-[6px] text-white font-bold">
          <span className="flex-1 tracking-[-0.25px]">File References</span>
          <Icon w={8} h={8}><path d="M0 1h1.500M0 4h1.500M0 7h1.500M3 1h5M3 4h5M3 7h5" stroke={G} /></Icon>
          <div className="w-[9px]" />
          <Icon w={9} h={10}><path d="M.500.500h3v3h-3zM5.500 6.500h3v3h-3zM2 4v4h3" stroke={G} /></Icon>
        </div>
        <div className="flex h-[113px] border-l border-[#222933]">
          <div className="w-[323px] overflow-hidden text-[#f0f1f2] whitespace-nowrap">
            <div className="flex h-[24px] bg-[#464f61] border-b border-[#2d3340] text-[#dfe2e6] items-center">
              <div className="w-[19px] h-full border-r border-[#2d3340]" />
              <div className="w-[188px] h-full border-r border-[#2d3340] flex items-center pl-[7px] pr-[7px]">
                <span className="flex-1">Reference Name</span>
                <svg width="10" height="5"><path d="M0 5h10L5 0z" fill={G} /></svg>
              </div>
              <div className="w-[72px] h-full border-r border-[#2d3340] pl-[7px] flex items-center">Status</div>
              <div className="pl-[7px]">Size</div>
            </div>
            <div className="flex h-[19px] items-center">
              <div className="w-[20px] pl-px"><DwgIcon /></div>
              <span className="w-[204px] tracking-[-0.45px]">EFN_TTT_MASTERPLAN*</span>
              <span className="w-[56px] tracking-[-0.2px]">Opened</span>
              <span className="tracking-[-0.35px]">9.25 MB</span>
            </div>
            {refs.map(name => (
              <div key={name} className="flex h-[19px] items-center">
                <div className="w-[20px]"><DxeIcon /></div>
                <span className="w-[190px] tracking-[-0.3px]">{name}</span>
                <span className="w-[14px] text-[#aab0b8] text-[11px]">!</span>
                <span className="tracking-[-0.3px]">Unresol...</span>
              </div>
            ))}
          </div>
          <div className="flex-1 bg-[#f0f0f0] flex flex-col items-center">
            <svg width="8" height="6" className="mt-[7px] shrink-0"><path d="M0 5l4-4 4 4" stroke="#505050" strokeWidth="2" fill="none" /></svg>
            <div className="w-[15px] h-[35px] mt-[4px] bg-[#cdcdcd]" />
            <svg width="8" height="6" className="mt-[50px] shrink-0"><path d="M0 0l4 4 4-4" stroke="#505050" strokeWidth="2" fill="none" /></svg>
          </div>
        </div>
        <div className="h-[17px] bg-[#f0f0f0] flex items-center pl-[5px] border-l border-[#222933]">
          <svg width="6" height="8"><path d="M5 0L1 4l4 4" stroke="#505050" strokeWidth="2" fill="none" /></svg>
          <div className="ml-[6px] w-[92px] h-[15px] bg-[#cdcdcd]" />
          <svg width="6" height="8" className="ml-[202px]"><path d="M0 0l4 4-4 4" stroke="#505050" strokeWidth="2" fill="none" /></svg>
        </div>
        <div className="h-[6px] mt-[2px] bg-[#2d3340]" />
        <div className="h-[22px] mt-[1px] bg-[#2d3340] border border-[#222933] flex items-center pl-[9px] pr-[8px] text-[#c9ccd1] font-bold">
          <span className="flex-1">D</span>
          <Icon w={9} h={10}><path d="M.500.500h5l3 3v6h-8zM3 5.500h6v3H3z" stroke="#7b818b" /></Icon>
          <div className="w-[6px]" />
          <Icon w={12} h={10}><path d="M0 0h12v10H0z" fill="#7b818b" /><path d="M1 8l3-3 3 2 4-1v3z" fill="#2d3340" /><circle cx="8" cy="3" r="1.300" fill="#2d3340" /></Icon>
          <div className="w-[13px]" />
          <Icon w={5} h={8}><path d="M5 0v8L0 4z" fill="#e8e8e8" /></Icon>
        </div>
      </div>
      <div className="h-[42px] border-b border-[#2d3340]" />
    </div>
  );
}

function Balloon() {
  return (
    <div className="absolute left-[1589px] top-[925px] w-[248px] h-[100px] text-[12px] leading-none text-black">
      <svg width="248" height="100" viewBox="0 0 248 100" className="absolute left-0 top-0">
        <path d="M15 .500h217q14 0 14 14v51q0 14-14 14H190.500V98L172.500 79.500H15Q1 79.500 1 65.500V14.500Q1 .500 15 .500z" fill="#ffffe1" stroke="#000" />
        <circle cx="18" cy="18" r="8" fill="#2a55c0" /><circle cx="18" cy="15" r="6" fill="#5b87dd" opacity=".6" />
        <path d="M18 12v2M18 16v6M16 22.500h4" stroke="#fff" strokeWidth="2" />
      </svg>
      <div className="relative flex items-center h-[27px] pt-[9px] pl-[36px]">
        <span className="w-[186px] font-bold tracking-[-0.5px]">Plot and Publish Job Complete</span>
        <div className="w-4 h-4 border border-[#999] bg-[#f0f0e8] flex items-center justify-center shrink-0">
          <Icon w={9} h={9}><path d="M1 1l7 7M8 1L1 8" stroke="#000" strokeWidth="2" /></Icon>
        </div>
      </div>
      <div className="relative pl-[16px] mt-[8px] tracking-[-0.42px]">No errors or warnings found</div>
      <div className="relative pl-[16px] mt-[9px] tracking-[-0.25px] text-[#0000f0] underline underline-offset-2">Click to view plot and publish details...</div>
    </div>
  );
}

/* ---------- status bar ---------- */

const cell = 'h-6 bg-[#3b4453] flex items-center shrink-0';
const hl = 'h-[22px] bg-[#5f8fc4] flex items-center justify-center shrink-0';

function StatusBar() {
  return (
    <div className="flex h-[29px] text-[12px] border-t border-[#3b4453]">
      <div className="w-[1315px] flex items-start">
        <div className="ml-[14px] w-[53px] h-[17px] rounded-b-[8px] bg-[#3b4453] text-white font-bold tracking-[-0.3px] flex items-center justify-center pb-px">Model</div>
        <div className="ml-[4px] w-[50px] h-[17px] rounded-b-[8px] bg-[#2f3644] text-[#c4c7cc] tracking-[-0.2px] flex items-center justify-center pb-px">P.Site</div>
        <div className="ml-[5px] w-[21px] h-[15px] rounded-br-[10px] rounded-tl-[8px] bg-[#2f3644] flex items-center justify-center"><Icon w={8} h={8}><path d="M4 0v8M0 4h8" stroke="#b4b7bc" strokeWidth="1.500" /></Icon></div>
      </div>
      <div className="flex gap-[3px] pt-px text-white whitespace-nowrap">
        <div className={`${cell} w-[47px] justify-center tracking-[-0.3px]`}>MODEL</div>
        <div className={`${cell} w-[63px] pl-[4px]`}>
          <Icon w={15} h={16}><path d="M4 0v16M8 0v16M12 0v16M0 4h15M0 8h15M0 12h15" stroke={G} strokeWidth="1.200" /></Icon>
          <div className="w-[11px]" />
          <Icon w={13} h={13}><path d="M0 1h13M0 6h13M0 11h13" stroke={G} strokeWidth="2" strokeDasharray="2 3.500" /></Icon>
          <div className="w-[9px]" /><Caret big />
        </div>
        <div className={`${cell} w-[102px]`}>
          <div className={`${hl} w-[23px]`}><Icon w={18} h={18}><path d="M1.500 0v17h16v-5H8v5M8 12v5" stroke="#fff" strokeWidth="1.400" /></Icon></div>
          <div className="w-[4px]" />
          <Icon w={17} h={16}><circle cx="7" cy="9" r="6" stroke={G} /><path d="M7 9h10M7 9l8-8M12 4v10" stroke={G} /></Icon>
          <div className="w-[7px]" /><Caret big />
          <div className="w-[7px]" />
          <Icon w={16} h={18}><path d="M2 0l13 15" stroke="#e05c62" /><path d="M8 0v18" stroke="#4fd34f" /><path d="M6 8h4v3H6z" stroke={G} /><path d="M1 6l5 3" stroke={G} /></Icon>
          <div className="w-[7px]" /><Caret big />
        </div>
        <div className={`${cell} w-[64px] pl-[4px] -ml-[2px]`}>
          <Icon w={16} h={14}><path d="M15 1L2 12.500h14M4 8l3 3" stroke={G} strokeWidth="1.200" /></Icon>
          <div className="w-[5px]" />
          <div className={`${hl} w-[22px]`}><Icon w={17} h={17}><path d="M7 2.500h9.500v13h-14V8" stroke="#fff" /><path d="M.500.500h4v4h-4z" stroke="#fff" /></Icon></div>
          <div className="w-[5px]" /><Caret big />
        </div>
        <div className={`${cell} w-[120px]`}>
          <div className={`${hl} w-[23px]`}><Icon w={17} h={17}><path d="M7 1l3 8 3 6-4-1-2 2-2-2-5 2 4-7z" fill="#fff" /><circle cx="13" cy="4" r="2.500" stroke="#fff" /></Icon></div>
          <div className="w-[5px]" />
          <Icon w={16} h={16}><path d="M7 1l3 8 3 6-4-1-2 2-2-2-5 2 4-7z" fill={G} /><path d="M15 0l-4 4h4l-4 4" stroke={G} strokeWidth="1.300" /></Icon>
          <div className="w-[8px]" />
          <Icon w={15} h={16}><path d="M7 1l3 8 4 7-5-2-2 1-2-1-5 2 4-7z" fill={G} /></Icon>
          <span className="ml-[9px] mr-[4px] tracking-[-0.75px]">1:500</span><Caret big />
        </div>
        <div className={`${cell} w-[39px] pl-[4px]`}>
          <Icon><circle cx="8" cy="8" r="4" stroke={G} strokeWidth="3.500" /><path d="M8 0v3M8 13v3M0 8h3M13 8h3M2.500 2.500l2 2M11.500 11.500l2 2M13.500 2.500l-2 2M4.500 11.500l-2 2" stroke={G} strokeWidth="2.800" /></Icon>
          <div className="w-[8px]" /><Caret big />
        </div>
        <div className={`${cell} w-[24px] justify-center -ml-[2px]`}><Icon><path d="M8 0v16M0 8h16" stroke={G} strokeWidth="2" /></Icon></div>
        <div className={`${cell} w-[24px] justify-center`}><Icon><path d="M.500.500h6v6h-6zM7 10.500l3 5H4z" stroke={G} /><circle cx="13" cy="7" r="2.800" stroke={G} /></Icon></div>
        <div className={`${cell} w-[49px] justify-center gap-[6px]`}>
          <Icon w={17} h={16}><path d="M3.500 5V.500h10V5M1 5.500h15v7H1zM1 8.500h15" stroke={G} strokeWidth="1.300" /><path d="M4 10h9v5H4z" fill="#f7b183" stroke="#e9e9e9" /></Icon>
          <Icon w={16} h={16}><path d="M1 1h8l5 4v7H1z" fill="#2c68a8" /><path d="M0 8h7v7H0z" fill="#f2b83a" /><path d="M4 0v8M0 4h8" stroke="#cfe2f5" /><path d="M7 11l3 4 6-8" stroke="#4fb548" strokeWidth="2" /></Icon>
        </div>
        <div className={`${cell} w-[48px] pl-[4px] gap-[8px]`}>
          <Icon w={16} h={13}><path d="M.500.500h15v12H.500z" stroke={G} /><path d="M9 6l4-3M10 2.500h3.500V6M7 7l-4 3M2.500 7v3.500H6" stroke={G} /></Icon>
          <Icon w={16} h={14}><path d="M0 1h16M0 7h16M0 13h16" stroke={G} strokeWidth="2" /></Icon>
        </div>
      </div>
    </div>
  );
}

/* ---------- windows taskbar ---------- */

function TaskApp({ icon, className, bar, extra }: { icon: ReactNode; className: string; bar?: string; extra?: string }) {
  return (
    <div className={`${className} h-10 flex flex-col items-center justify-between shrink-0`}>
      <div className="h-[38px] flex items-center">{icon}</div>
      <div className="flex h-[2px]">
        {bar && <div className={`${bar} h-[2px] bg-[#76b9ed]`} />}
        {extra && <div className={`${extra} h-[2px] bg-[#5a8cb3]`} />}
      </div>
    </div>
  );
}

function Tray() {
  return (
    <div className="flex items-center text-white text-[14px] whitespace-nowrap">
      <Icon w={22} h={18}><circle cx="8" cy="7" r="6.500" fill="#f7b733" /><path d="M5 17a5 5 0 0 1 1-9 6 6 0 0 1 11 1 4.200 4.200 0 0 1 0 8z" fill="#dcebf9" /></Icon>
      <span className="ml-[9px] w-[38px] tracking-[-0.5px]">12°C</span>
      <span className="w-[103px] tracking-[-0.3px]">Mostly cloudy</span>
      <Icon w={12} h={7}><path d="M1 6l5-5 5 5" stroke="#fff" strokeWidth="1.300" /></Icon>
      <div className="w-[10px]" />
      <Icon w={16} h={18}><path d="M4 1l4 2.500L12 1l4 2.500-4 2.500 4 2.500-4 2.500-4-2.500L4 11 0 8.500 4 6 0 3.500z" fill="#fff" /><rect y="6" width="9" height="11" rx="2" fill="#e8112d" /><text x="2" y="15" fontFamily="Open Sans, sans-serif" fontSize="9" fontWeight="700" fill="#fff">4</text></Icon>
      <div className="w-[8px]" />
      <Icon w={17} h={16}><path d="M3 12a3 3 0 0 1 0-6 5 5 0 0 1 9-2 4 4 0 0 1 3 7z" fill="#1b7fd6" /><circle cx="12" cy="11" r="5" fill="#e8f1fa" /><path d="M9 11a3 3 0 0 1 5-2M15 11a3 3 0 0 1-5 2" stroke="#1b6fc0" strokeWidth="1.500" /></Icon>
      <div className="w-[7px]" />
      <Icon w={17} h={12}><path d="M3 11a3 3 0 0 1 0-6 5 5 0 0 1 9-2 4 4 0 0 1 2 8z" fill="#1e8ee6" /></Icon>
      <div className="w-[8px]" />
      <Icon w={16} h={15}><path d="M5 1.500h10.500v9H4M9.500 11v3M6 14.500h7M.500.500h4v4h-4zM2.500 5v9" stroke="#fff" /></Icon>
      <div className="w-[7px]" />
      <Icon w={16} h={14}><path d="M.500 5h2l4-4v12l-4-4h-2z" stroke="#fff" /><path d="M8.500 5q1.500 2 0 4M11 3q3 4 0 8M13.500 1.500q4 5.500 0 11" stroke="#fff" /></Icon>
      <span className="ml-[10px] w-[34px] text-[12px] tracking-[-0.6px]">ENG</span>
      <div className="w-[62px] flex flex-col items-center text-[12px] leading-[18px] tracking-[-0.5px]">
        <span>15:53</span>
        <span>22/10/2021</span>
      </div>
      <div className="w-[15px]" />
      <svg width="26" height="30" viewBox="0 0 26 30" fill="none">
        <path d="M0 4h17v13H9l-4 4v-4H0z" fill="#fff" /><path d="M3 7.500h11M3 10.500h11M3 13.500h7" stroke="#1c1f20" />
        <circle cx="16" cy="20" r="7.500" fill="#3a3a38" stroke="#9a9a98" /><text x="13" y="24" fontFamily="Open Sans, sans-serif" fontSize="11" fill="#fff">3</text>
      </svg>
      <div className="w-px h-10 bg-[#5b5d5a] ml-[10px] mr-[4px]" />
    </div>
  );
}

function Taskbar() {
  return (
    <div className="flex h-10 bg-linear-to-r from-[#1b1f21] via-[#272422] to-[#1c211e]">
      <div className="w-12 flex items-center justify-center">
        <Icon><path d="M0 2l7-1v6.500H0zM8 .900L16 0v7.500H8zM0 8.500h7V15l-7-1zM8 8.500h8V16l-8-1z" fill="#fff" /></Icon>
      </div>
      <div className="w-[344px] h-10 bg-[#f1f1f1] border border-[#bdbdbd] flex items-center pl-[11px]">
        <Icon w={17} h={17}><circle cx="11" cy="6" r="5" stroke="#222" strokeWidth="1.300" /><path d="M7.500 9.500L1 16" stroke="#222" strokeWidth="1.300" /></Icon>
        <span className="ml-[11px] text-[15px] tracking-[-0.25px] text-[#3a3a3a]">Type here to search</span>
      </div>
      <TaskApp className="w-[48px]" icon={<Icon><path d="M.500 0v3.500h11V0M.500 5.500h11v6H.500zM.500 16v-2.500h11V16M14.500 0v3M14.500 8v8" stroke="#fff" strokeWidth="1.200" /><path d="M13 4h3v3h-3z" fill="#fff" /></Icon>} />
      <TaskApp className="w-[54px]" bar="w-[40px]" icon={
        <Icon w={24} h={22}><path d="M7 0h16v19H7z" fill="#1673c8" /><path d="M13 2h5v5h-5z" fill="#2aa6ee" /><path d="M18 2h5v5h-5z" fill="#58d3fb" /><path d="M6 22h18V12l-9 5-9-5z" fill="#2599e6" /><path d="M24 12v10H14z" fill="#1b8ad8" /><rect y="5" width="12" height="12" rx="1" fill="#0f6cbd" /><circle cx="6" cy="11" r="3" stroke="#fff" strokeWidth="1.800" /></Icon>
      } />
      <TaskApp className="w-[44px]" bar="w-[31px]" extra="w-[9px]" icon={
        <Icon w={22} h={18}><path d="M0 0h9l2 2h11v15H0z" fill="#ffd363" /><path d="M0 0h9l1 2-2 2H0z" fill="#e59d0b" /><path d="M4 10h14v8h-4v-4H8v4H4z" fill="#3f9bdc" /></Icon>
      } />
      <TaskApp className="w-[54px]" bar="w-[40px]" icon={
        <Icon w={24} h={24}><circle cx="12" cy="12" r="12" fill="#1a6fc4" /><path d="M0 12A12 12 0 0 1 24 12c0 4-4 5-8 4-2-1 0-3-1-5-2-4-11-4-15 1z" fill="#39c6d8" /><path d="M14 0c7 1 10 6 10 12 0 4-4 5-8 4-2-1 0-3-1-5z" fill="#5ad66e" opacity=".75" /><path d="M9 12c2-2 5-2 6 0-1 3 0 5 5 6-5 2-11 0-11-6z" fill="#15365c" /><circle cx="6" cy="18" r="5.500" fill="#c9c6c2" /><circle cx="6" cy="16.500" r="1.800" fill="#777" /><path d="M3 21.500c0-4 6-4 6 0z" fill="#777" /></Icon>
      } />
      <TaskApp className="w-[44px]" icon={
        <Icon w={24} h={22}><path d="M6 0h18v22H6z" fill="#2b7cd3" /><path d="M6 0h18v5.500H6z" fill="#41a5ee" /><path d="M6 11h18v5.500H6z" fill="#185abd" /><path d="M6 16.500h18V22H6z" fill="#103f91" /><path d="M0 5h12v12H0z" fill="#1857b8" /><path d="M2.500 8l1.800 6.500L6 9l1.800 5.500L9.500 8" stroke="#fff" strokeWidth="1.400" /></Icon>
      } />
      <TaskApp className="w-[53px]" icon={
        <Icon w={23} h={23}><circle cx="11.500" cy="11.500" r="11" fill="#f7c52b" /><path d="M11.500 11.500L1.500 7A11 11 0 0 1 21.500 7z" fill="#e0453a" /><path d="M1.500 7l6.500 7 4 1-1.500 7.500A11 11 0 0 1 1.500 7z" fill="#2a9d4e" /><circle cx="11.500" cy="11.500" r="5.500" fill="#fff" /><circle cx="11.500" cy="11.500" r="4.300" fill="#3f7de8" /></Icon>
      } />
      <TaskApp className="w-[48px]" icon={
        <div className="w-[21px] h-[20px] rounded-[3px] border border-[#2fc3f5] bg-[#041c26] text-[#e4f6fe] text-[11px] font-semibold flex items-center justify-center tracking-[-0.5px]">Ps</div>
      } />
      <div className="w-[44px] bg-[#555250] flex flex-col justify-between">
        <div className="h-[38px] flex items-center pl-[12px]">
          <Icon w={24} h={24}><path d="M0 0h24v24H0z" fill="#f9eae4" /><path d="M4 17L10 2h4l5 15h-3.500l-1-4H10l-2 5zM10.500 10h3L12 5.500z" fill="#c0242c" fillRule="evenodd" /><path d="M17.500 19v3h2M20 19.500h2.500M21.500 19v3.500" stroke="#d2333a" /></Icon>
        </div>
        <div className="h-[2px] bg-[#76b9ed]" />
      </div>
      <div className="w-1 border-l border-[#333] bg-[#484644] flex items-end"><div className="w-full h-[2px] bg-[#5a8cb3]" /></div>
      <div className="w-[5px]" />
      <TaskApp className="w-[40px]" bar="w-[31px]" extra="w-[9px]" icon={
        <Icon w={21} h={21}><rect width="21" height="21" rx="4" fill="#b30b00" /><path d="M10 4c2 0 1 5-5 12-1 1-2-1 3-3 6-2 10-1 8 0s-6-4-7-8c0-1 0-1 1-1z" stroke="#fff" strokeWidth="1.300" /></Icon>
      } />
      <div className="flex-1" />
      <Tray />
    </div>
  );
}

export default function App() {
  return (
    <div className="relative w-[1920px] h-[1080px] overflow-hidden bg-[#222933] font-['Open_Sans',sans-serif] flex flex-col">
      <div className="flex h-[45px]">
        <AppButton />
        <div className="flex-1 flex flex-col">
          <TitleBar />
          <MenuTabs />
        </div>
      </div>
      <Ribbon />
      <DocTabs />
      <div className="h-1 bg-[#3b4453]" />
      <div className="flex h-[838px]">
        <Canvas />
        <div className="w-[360px] bg-[#3b4453] text-[12px] tracking-[-0.15px] leading-none">
          <PropertiesPalette />
          <ExternalReferences />
        </div>
      </div>
      <StatusBar />
      <Taskbar />
      <Balloon />
    </div>
  );
}
